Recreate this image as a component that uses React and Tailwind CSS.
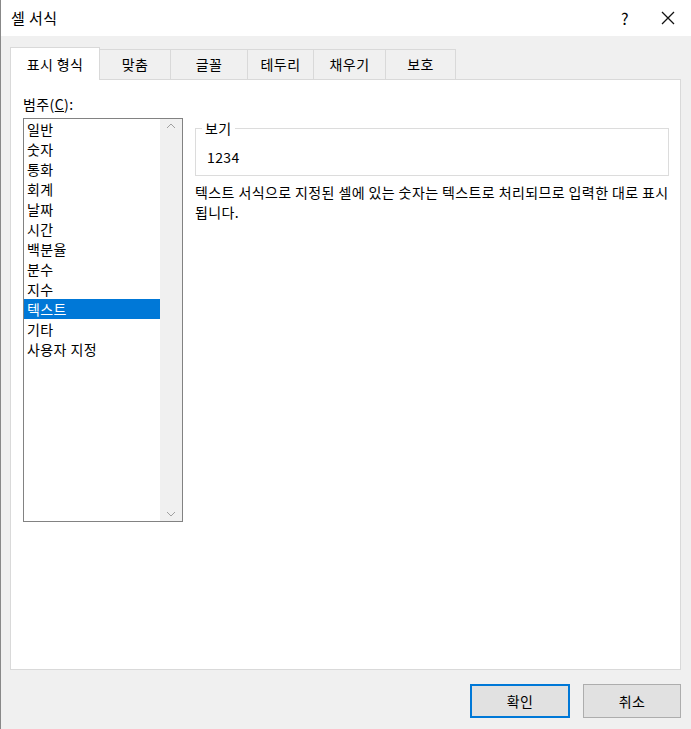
export default function App() {
  const items = ['일반', '숫자', '통화', '회계', '날짜', '시간', '백분율', '분수', '지수', '텍스트', '기타', '사용자 지정']
  const tabs = [['맞춤', 71], ['글꼴', 77], ['테두리', 66], ['채우기', 72], ['보호', 70]]
  const font = { fontFamily: '"Noto Sans CJK KR", "Noto Sans", sans-serif' }
  return (
    <div className="w-[691px] h-[729px] bg-[#f0f0f0] border-l border-[#888] text-[14px] tracking-[0.4px] text-black flex flex-col overflow-hidden" style={font}>
      <div className="h-[36px] bg-white flex items-center justify-between pl-[10px] shrink-0">
        <span className="text-[15px]">셀 서식</span>
        <div className="flex items-center">
          <span className="w-[40px] text-center text-[16px]">?</span>
          <svg width="46" height="20" viewBox="0 0 46 20"><path d="M17 4l12 12M29 4L17 16" stroke="#111" strokeWidth="1.3" /></svg>
        </div>
      </div>
      <div className="h-[10px]" />
      <div className="flex items-end pl-[9px] h-[33px] shrink-0">
        <div className="w-[90px] h-[33px] bg-white border border-b-0 border-[#d9d9d9] flex items-center justify-center relative z-10 -mb-px">표시 형식</div>
        {tabs.map(([t, w]) => (
          <div key={t} className="h-[30px] bg-[#f0f0f0] border border-l-0 border-b-0 border-[#d9d9d9] flex items-center justify-center" style={{ width: w }}>{t}</div>
        ))}
      </div>
      <div className="ml-[9px] w-[671px] h-[591px] bg-white border border-[#d9d9d9] flex flex-col">
        <div className="pl-[12px] pt-[14px] h-[38px]">범주(<span className="underline">C</span>):</div>
        <div className="flex pl-[12px]">
          <div className="w-[160px] h-[404px] border border-[#828282] flex shrink-0">
            <div className="flex-1 flex flex-col">
              {items.map(i => (
                <div key={i} className={`h-[20px] leading-[20px] pl-[3px] ${i === '텍스트' ? 'bg-[#0078d7] text-white' : ''}`}>{i}</div>
              ))}
            </div>
            <div className="w-[22px] bg-[#f0f0f0] flex flex-col justify-between items-center py-[4px]">
              <svg width="10" height="6" viewBox="0 0 10 6"><path d="M1 5l4-4 4 4" fill="none" stroke="#a0a0a0" /></svg>
              <svg width="10" height="6" viewBox="0 0 10 6"><path d="M1 1l4 4 4-4" fill="none" stroke="#a0a0a0" /></svg>
            </div>
          </div>
          <div className="ml-[12px] w-[474px] flex flex-col">
            <div className="relative border border-[#dcdcdc] h-[48px] mt-[10px] flex items-center pl-[11px] pt-[10px]">
              <span className="absolute -top-[11px] left-[6px] bg-white px-[3px]">보기</span>
              1234
            </div>
            <p className="mt-[6px] leading-[20px]">텍스트 서식으로 지정된 셀에 있는 숫자는 텍스트로 처리되므로 입력한 대로 표시됩니다.</p>
          </div>
        </div>
      </div>
      <div className="flex justify-end gap-[13px] pr-[10px] pt-[14px]">
        <div className="w-[100px] h-[34px] bg-[#e1e1e1] border-2 border-[#0078d7] flex items-center justify-center">확인</div>
        <div className="w-[98px] h-[34px] bg-[#e1e1e1] border border-[#adadad] flex items-center justify-center">취소</div>
      </div>
    </div>
  )
}
